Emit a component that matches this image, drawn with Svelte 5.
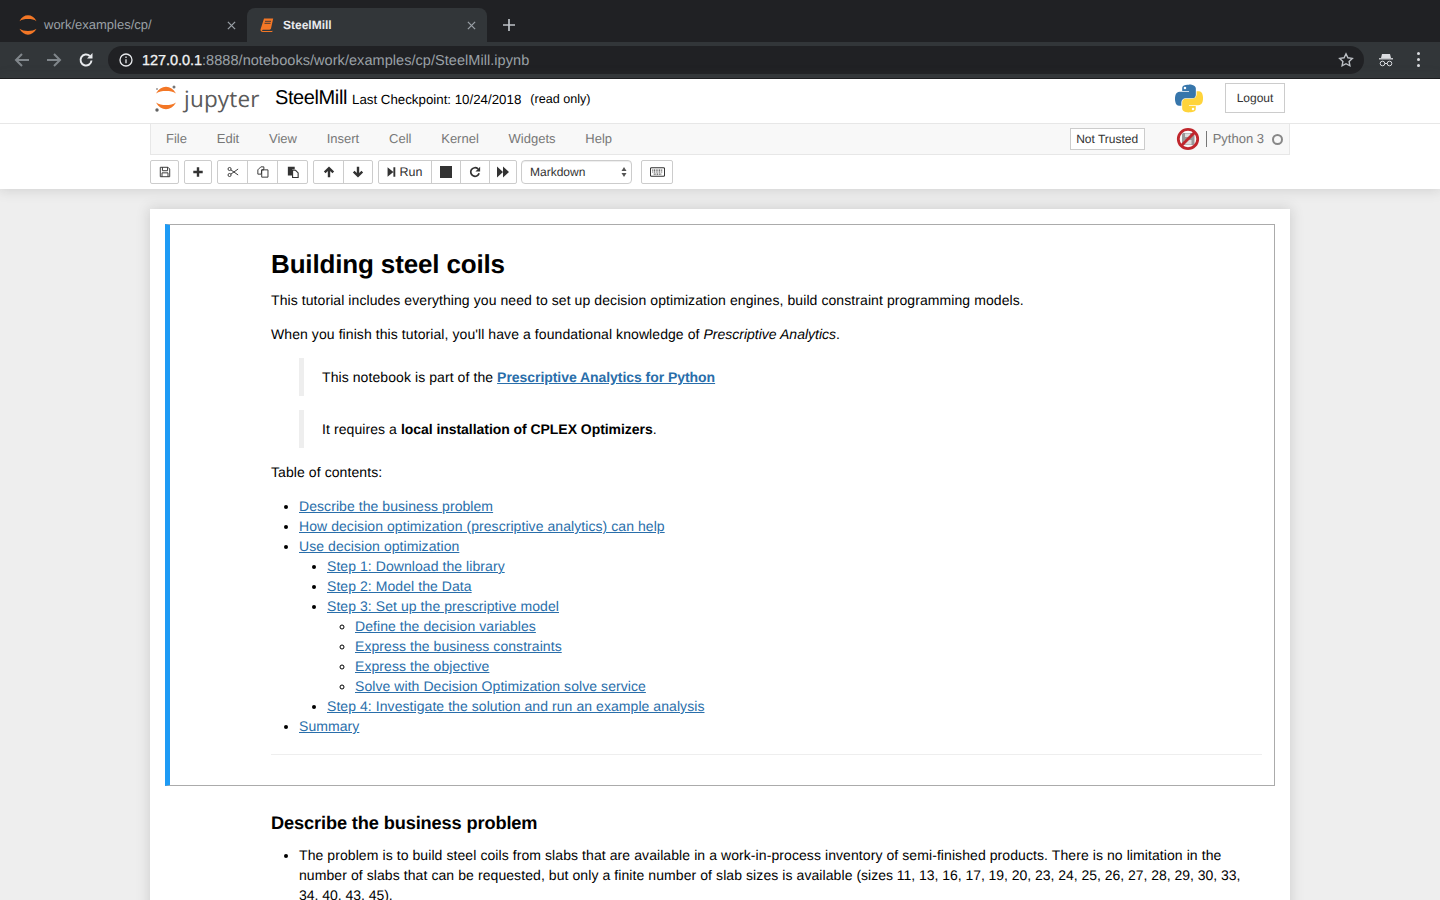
<script>
  const menus = ['File','Edit','View','Insert','Cell','Kernel','Widgets','Help'];
  const nums = '11, 13, 16, 17, 19, 20, 23, 24, 25, 26, 27, 28, 29, 30, 33,';
</script>

{#snippet jlogo(cls)}
  <svg class={cls} viewBox="0 0 28 28" aria-hidden="true">
    <path d="M4 9.500C6.500 5 10 2.700 14 2.700s7.500 2.300 10 6.800C21 7.500 18 7 14 7S7 7.500 4 9.500Z" fill="#f37726"/>
    <path d="M4 18.500C6.500 23 10 25.300 14 25.300s7.500-2.300 10-6.800C21 20.500 18 21 14 21S7 20.500 4 18.500Z" fill="#f37726"/>
    {#if cls === 'jlogo'}
      <circle cx="22" cy="3" r="1.500" fill="#767677"/><circle cx="5" cy="5" r="1" fill="#989798"/><circle cx="5" cy="26" r="1.700" fill="#616262"/>
    {/if}
  </svg>
{/snippet}

<div class="page">
  <div class="tabbar">
    <div class="tab">
      {@render jlogo('fav')}
      <span class="tabtitle">work/examples/cp/</span>
      <svg class="tx" viewBox="0 0 10 10"><path d="M1 1l8 8M9 1l-8 8"/></svg>
    </div>
    <div class="tab active">
      <svg class="book" viewBox="0 0 14 14"><path d="M4 .5h9.200L11 10.600c-.2.8-.7 1.100-1.400 1.100H3c-.6 0-.9.3-.9.7 0 .3.3.6.8.6h8.700l1-.3-.4 1.300H2.700C1.300 13.900.3 13 .5 11.600Z" fill="#f37726"/><path d="M5 3.300h6M4.500 5.300h6" stroke="#323639" stroke-width=".9"/></svg>
      <span class="tabtitle strong">SteelMill</span>
      <svg class="tx" viewBox="0 0 10 10"><path d="M1 1l8 8M9 1l-8 8"/></svg>
    </div>
    <svg class="newtab" viewBox="0 0 12 12"><path d="M6 0v12M0 6h12"/></svg>
  </div>

  <div class="addr">
    <svg class="nav dim" viewBox="0 0 16 16"><path d="M15 8H2M8 2L2 8l6 6"/></svg>
    <svg class="nav dim" viewBox="0 0 16 16"><path d="M1 8h13M8 2l6 6-6 6"/></svg>
    <svg class="nav" viewBox="0 0 16 16"><path d="M13.500 8.500A5.500 5.500 0 1 1 11.800 4"/><path d="M14.500 1v5.500H9" class="fillw"/></svg>
    <div class="omni">
      <svg class="info" viewBox="0 0 14 14"><circle cx="7" cy="7" r="6"/><path d="M7 6.200v4M7 3.500v1.400"/></svg>
      <span class="url"><b>127.0.0.1</b>:8888/notebooks/work/examples/cp/SteelMill.ipynb</span>
      <svg class="star" viewBox="0 0 16 16"><path d="M8 1.800l1.900 4 4.400.6-3.200 3 .8 4.400L8 11.700l-3.900 2.100.8-4.400-3.200-3 4.400-.6Z"/></svg>
    </div>
    <svg class="incog" viewBox="0 0 16 16"><path d="M4 2h8l1 4H3Z" fill="#dadce0"/><path d="M1 6.800h14" stroke="#dadce0" stroke-width="1.300"/><circle cx="4.500" cy="11.500" r="2.300" fill="none" stroke="#dadce0"/><circle cx="11.500" cy="11.500" r="2.300" fill="none" stroke="#dadce0"/><path d="M6.800 11.500h2.400" stroke="#dadce0"/></svg>
    <div class="kebab"><i></i><i></i><i></i></div>
  </div>

  <header class="nbhead">
    <div class="titlebar">
      <div class="wrap titlewrap">
        {@render jlogo('jlogo')}
        <span class="jword">jupyter</span>
        <span class="nbname">SteelMill</span>
        <span class="chk">Last Checkpoint: 10/24/2018</span>
        <span class="chk ro">(read only)</span>
        <svg class="pylogo" viewBox="0 0 111 111" aria-hidden="true">
          <path d="M54.900.5C50.300.5 46 .9 42.100 1.600 30.700 3.600 28.600 7.800 28.600 15.500V25.700H55.600V29.100H18.500C10.700 29.100 3.800 33.800 1.700 42.800-.8 53.100-.9 59.500 1.700 70.200 3.600 78.200 8.200 83.900 16 83.900H25.200V71.600C25.200 62.700 32.900 54.900 42.100 54.900H69.100C76.600 54.900 82.600 48.700 82.600 41.200V15.500C82.600 8.200 76.400 2.700 69.100 1.500 64.400.7 59.600.4 54.900.5Z" fill="#3776ab"/>
          <circle cx="39.500" cy="14" r="5" fill="#fff"/>
          <g transform="rotate(180 55.500 55.500)">
            <path d="M54.900.5C50.300.5 46 .9 42.100 1.600 30.700 3.600 28.600 7.800 28.600 15.500V25.700H55.600V29.100H18.500C10.700 29.100 3.800 33.800 1.700 42.800-.8 53.100-.9 59.500 1.700 70.200 3.600 78.200 8.200 83.900 16 83.900H25.200V71.600C25.200 62.700 32.900 54.900 42.100 54.900H69.100C76.600 54.900 82.600 48.700 82.600 41.200V15.500C82.600 8.200 76.400 2.700 69.100 1.500 64.400.7 59.600.4 54.900.5Z" fill="#ffd43b"/>
            <circle cx="39.500" cy="14" r="5" fill="#fff"/>
          </g>
        </svg>
        <span class="logout">Logout</span>
      </div>
    </div>
    <div class="wrap menubar">
      {#each menus as m}<span class="menu">{m}</span>{/each}
      <span class="trust">Not Trusted</span>
      <svg class="noentry" viewBox="0 0 24 24">
        <path d="M7 6h10l1.500 1.500V18H6V7Z" fill="#999"/><path d="M9 6.500h5v3.500H9ZM8.500 13h7v4.500h-7Z" fill="#ddd"/>
        <circle cx="12" cy="12" r="9.700" fill="none" stroke="#c0272d" stroke-width="2.800"/>
        <path d="M18.500 5.500l-13 13" stroke="#c0272d" stroke-width="2.800"/>
      </svg>
      <span class="ksep"></span>
      <span class="kname">Python 3</span>
      <span class="kstat"></span>
    </div>
    <div class="wrap tools">
      <div class="grp g-save"><span class="btn"><svg viewBox="0 0 14 14"><path d="M1.500 1.500h9l2 2v9h-11Z" class="ol"/><path d="M4 1.500v4h6v-4M3.500 12.500v-4.500h7v4.500" class="ol"/></svg></span></div>
      <div class="grp g-add"><span class="btn"><svg viewBox="0 0 14 14"><path d="M7 1.500v11M1.500 7h11" class="bold"/></svg></span></div>
      <div class="grp g-edit">
        <span class="btn"><svg viewBox="0 0 14 14"><circle cx="3" cy="3.500" r="1.800" class="ol"/><circle cx="3" cy="10.500" r="1.800" class="ol"/><path d="M4.500 4.500l8.500 6M4.500 9.500l8.500-6" class="ol"/></svg></span>
        <span class="btn"><svg viewBox="0 0 14 14"><path d="M1 4.500L4.500 1H8v3.500H5.500L5 9.500H1Z" class="ol"/><path d="M5.500 4.500H9L12.800 4.500V13H5.500Z" class="ol"/></svg></span>
        <span class="btn"><svg viewBox="0 0 14 14"><path d="M1 1h8v3H6v7H1Z"/><path d="M6.500 5H10l3 3v5.500H6.500Z" class="pg"/></svg></span>
      </div>
      <div class="grp g-move">
        <span class="btn"><svg viewBox="0 0 14 14"><path d="M7 13V2.500M2 7.500l5-5 5 5" class="bold"/></svg></span>
        <span class="btn"><svg viewBox="0 0 14 14"><path d="M7 1v10.500M2 6.500l5 5 5-5" class="bold"/></svg></span>
      </div>
      <div class="grp g-run">
        <span class="btn run"><svg viewBox="0 0 14 14"><path d="M2 1.500h2.200v11H2ZM4.200 7L11 1.500v11Z" class="flip"/></svg>Run</span>
        <span class="btn"><svg viewBox="1.500 1.500 11 11"><path d="M1 1h12v12H1Z"/></svg></span>
        <span class="btn"><svg viewBox="0 0 14 14"><path d="M11.800 8.500A5 5 0 1 1 10.500 3.400" class="bold thin"/><path d="M13 1v5.500H7.500Z"/></svg></span>
        <span class="btn"><svg viewBox="1 1 12 12"><path d="M1 1.500L7 7V1.500L13 7l-6 5.500V7l-6 5.500Z"/></svg></span>
      </div>
      <div class="select">Markdown<svg viewBox="0 0 6 12"><path d="M3 1l2.500 4h-5ZM3 11L.5 7h5Z"/></svg></div>
      <div class="grp g-kbd"><span class="btn"><svg class="kb" viewBox="0 0 16 12"><rect x=".5" y="1.500" width="15" height="9" rx="1" class="ol"/><path d="M2.500 4h11M2.500 6h11M4 8.300h8" class="dots"/></svg></span></div>
    </div>
  </header>

  <main class="site">
    <div class="sheet">
      <section class="cell">
        <h1>Building steel coils</h1>
        <p>This tutorial includes everything you need to set up decision optimization engines, build constraint programming models.</p>
        <p>When you finish this tutorial, you'll have a foundational knowledge of <em>Prescriptive Analytics</em>.</p>
        <blockquote>This notebook is part of the <a href="#x"><b>Prescriptive Analytics for Python</b></a></blockquote>
        <blockquote>It requires a <b>local installation of CPLEX Optimizers</b>.</blockquote>
        <p class="toc">Table of contents:</p>
        <ul>
          <li><a href="#x">Describe the business problem</a></li>
          <li><a href="#x">How decision optimization (prescriptive analytics) can help</a></li>
          <li><a href="#x">Use decision optimization</a>
            <ul>
              <li><a href="#x">Step 1: Download the library</a></li>
              <li><a href="#x">Step 2: Model the Data</a></li>
              <li><a href="#x">Step 3: Set up the prescriptive model</a>
                <ul>
                  <li><a href="#x">Define the decision variables</a></li>
                  <li><a href="#x">Express the business constraints</a></li>
                  <li><a href="#x">Express the objective</a></li>
                  <li><a href="#x">Solve with Decision Optimization solve service</a></li>
                </ul>
              </li>
              <li><a href="#x">Step 4: Investigate the solution and run an example analysis</a></li>
            </ul>
          </li>
          <li><a href="#x">Summary</a></li>
        </ul>
        <hr />
      </section>
      <section class="next">
        <h2>Describe the business problem</h2>
        <ul>
          <li>The problem is to build steel coils from slabs that are available in a work-in-process inventory of semi-finished products. There is no limitation in the number of slabs that can be requested, but only a finite number of slab sizes is available <span class="nums">(sizes {nums} 34, 40, 43, 45).</span></li>
        </ul>
      </section>
    </div>
  </main>
</div>

<style>
  :global(body) { margin: 0; background: #eee; font-family: "Liberation Sans", Arial, sans-serif; font-size: 14px; color: #000; text-rendering: geometricPrecision; }
  svg { display: block; flex: none; }
  .page { height: 100vh; overflow: hidden; display: flex; flex-direction: column; }

  .tabbar { height: 42px; background: #202124; display: flex; align-items: flex-end; flex: none; }
  .tab { width: 247px; height: 34px; box-sizing: border-box; display: flex; align-items: center; padding: 0 0 0 16px; color: #9aa0a6; font-size: 13px; }
  .tab.active { width: 240px; padding-left: 13px; background: #323639; border-radius: 8px 8px 0 0; }
  .tabtitle { flex: 1; margin-left: 4px; padding-bottom: 1px; }
  .tabtitle.strong { color: #e8eaed; margin-left: 9px; font-weight: 700; font-size: 12px; }
  .fav { width: 24px; height: 24px; }
  .book { width: 14px; height: 14px; }
  .tx { width: 9px; height: 9px; margin-right: 11px; }
  .tx path { stroke: #9aa0a6; stroke-width: 1.400; fill: none; }
  .newtab { width: 12px; height: 12px; margin: 0 0 11px 16px; }
  .newtab path { stroke: #bdc1c6; stroke-width: 1.700; }

  .addr { height: 37px; box-sizing: border-box; background: #323639; border-bottom: 1px solid #17181a; display: flex; align-items: center; padding: 0 0 1px 14px; flex: none; }
  .nav { width: 16px; height: 16px; margin-right: 16px; fill: none; }
  .nav path { stroke: #e8eaed; stroke-width: 2; fill: none; }
  .nav path.fillw { fill: #e8eaed; stroke: none; }
  .nav.dim path { stroke: #80868b; }
  .omni { width: 1256px; margin-left: -2px; height: 28px; box-sizing: border-box; background: #202124; border-radius: 14px; display: flex; align-items: center; padding: 0 10px 0 11px; }
  .info { width: 14px; height: 14px; fill: none; }
  .info circle, .info path { stroke: #e8eaed; stroke-width: 1.300; fill: none; }
  .url { flex: 1; margin-left: 9px; padding-top: 2px; color: #9aa0a6; font-size: 14.500px; letter-spacing: .05px; white-space: nowrap; }
  .url b { color: #f1f3f4; font-weight: 400; -webkit-text-stroke: .3px #f1f3f4; }
  .star { width: 16px; height: 16px; }
  .star path { fill: none; stroke: #bdc1c6; stroke-width: 1.400; }
  .incog { width: 16px; height: 16px; margin-left: 14px; }
  .kebab { margin-left: 23px; display: flex; flex-direction: column; gap: 3px; }
  .kebab i { width: 3px; height: 3px; border-radius: 50%; background: #dadce0; display: block; }

  .nbhead { height: 110px; background: #fff; box-shadow: 0 0 12px 1px rgba(87,87,87,.2); flex: none; position: relative; }
  .wrap { width: 1140px; margin: 0 auto; box-sizing: border-box; display: flex; align-items: center; }
  .titlebar { height: 45px; box-sizing: border-box; border-bottom: 1px solid #e7e7e7; }
  .titlewrap { height: 38px; align-items: center; }
  .jlogo { width: 28px; height: 28px; margin-left: 2px; }
  .jword { font-family: "Open Sans", sans-serif; font-weight: 400; font-size: 22.500px; color: #5a5a5a; margin-left: 4px; letter-spacing: .2px; width: 91px; margin-top: 0; }
  .nbname { font-size: 20px; color: #000; letter-spacing: -.4px; margin-top: 0; }
  .chk { font-size: 13.300px; margin-left: 5px; margin-top: 2px; }
  .ro { margin-left: 9px; font-size: 12.600px; }
  .pylogo { width: 28px; height: 29px; margin-left: auto; margin-top: 0; }
  .logout { margin-left: 22px; margin-right: 5px; width: 60px; height: 30px; box-sizing: border-box; border: 1px solid #ccc; display: flex; align-items: center; justify-content: center; font-size: 12px; color: #333; }

  .menubar { height: 31px; background: #f8f8f8; border: 1px solid #e7e7e7; border-top: 0; color: #777; font-size: 13px; padding-bottom: 2px; }
  .menu { margin-left: 15px; padding-right: 14.800px; }
  .trust { margin-left: auto; width: 75px; height: 22px; margin-top: 2px; box-sizing: border-box; border: 1px solid #ccc; background: #fff; color: #333; font-size: 12px; display: flex; align-items: center; justify-content: center; }
  .noentry { width: 24px; height: 24px; margin: 2px 0 0 31px; }
  .ksep { width: 1px; height: 16px; background: #777; margin: 2px 0 0 6px; }
  .kname { margin-left: 6px; color: #777; font-size: 13px; }
  .kstat { width: 11px; height: 11px; box-sizing: border-box; border: 2px solid #888; border-radius: 50%; margin: 2px 6px 0 8px; }

  .tools { height: 34px; padding-top: 5px; align-items: flex-start; box-sizing: border-box; }
  .grp { display: flex; height: 24px; box-sizing: border-box; border: 1px solid #ccc; border-radius: 2px; background: #fff; margin-right: 5px; }
  .btn { display: flex; align-items: center; justify-content: center; box-sizing: border-box; border-left: 1px solid #ccc; height: 22px; width: 30px; color: #333; font-size: 12px; }
  .btn:first-child { border-left: 0; }
  .btn svg { width: 12px; height: 12px; fill: #333; }
  .g-save .btn { width: 27px; }
  .g-add .btn { width: 26px; }
  .g-edit .btn { width: 30px; }
  .g-edit .btn:first-child { width: 29px; }
  .g-move .btn { width: 29px; }
  .g-run { margin-right: 4px; }
  .g-run .btn { width: 29px; }
  .g-run .btn:last-child { width: 27px; }
  .btn.run, .g-run .btn.run { width: 52px; gap: 3px; font-size: 12.500px; padding-right: 3px; }
  .btn .flip { transform: scaleX(-1); transform-origin: center; }
  .btn .ol { fill: none; stroke: #333; stroke-width: 1.100; }
  .btn .pg { fill: #fff; stroke: #333; stroke-width: 1.300; }
  .btn .bold { fill: none; stroke: #333; stroke-width: 2.800; }
  .btn .thin { stroke-width: 2; }
  .btn .dots { fill: none; stroke: #333; stroke-width: 1.200; stroke-dasharray: 1 .8; }
  .btn svg.kb { width: 15px; height: 12px; }
  .select { width: 111px; height: 24px; box-sizing: border-box; border: 1px solid #ccc; border-radius: 4px; background: #fff; color: #333; font-size: 12px; display: flex; align-items: center; padding: 0 4px 0 8px; justify-content: space-between; margin-right: 9px; box-shadow: inset 0 1px 1px rgba(0,0,0,.075); }
  .select svg { width: 6px; height: 12px; fill: #555; }
  .g-kbd .btn { width: 30px; }

  .site { flex: 1; min-height: 0; padding-top: 20px; }
  .sheet { width: 1140px; margin: 0 auto; box-sizing: border-box; background: #fff; box-shadow: 0 0 12px 1px rgba(87,87,87,.2); padding: 15px; height: 900px; letter-spacing: .08px; }
  .cell { height: 562px; box-sizing: border-box; border: 1px solid #ababab; border-left: 5px solid #1e9bf5; padding: 24px 12px 0 101px; }
  .cell ul { letter-spacing: .065px; }
  .nums { letter-spacing: -.03px; }
  .next { padding: 26px 21px 0 106px; }
  h1 { font-size: 26px; line-height: 30px; margin: 0 0 11px; font-weight: 700; letter-spacing: -.15px; }
  h2 { font-size: 18.200px; line-height: 22px; margin: 0 0 11px; font-weight: 700; letter-spacing: -.12px; }
  p { margin: 0 0 14px; line-height: 20px; }
  b { letter-spacing: -.05px; }
  em { letter-spacing: 0; }
  blockquote { margin: 14px 0 14px 28px; border-left: 5px solid #eee; padding: 9px 0 9px 18px; line-height: 20px; }
  .toc { margin-top: 14px; }
  ul { margin: 0; padding-left: 28px; line-height: 20px; }
  ul ul { list-style-type: disc; }
  ul ul ul { list-style-type: circle; }
  a { color: #296eaa; text-decoration: underline; }
  hr { border: 0; border-top: 1px solid #eee; margin: 18px 0 0; }
</style>
